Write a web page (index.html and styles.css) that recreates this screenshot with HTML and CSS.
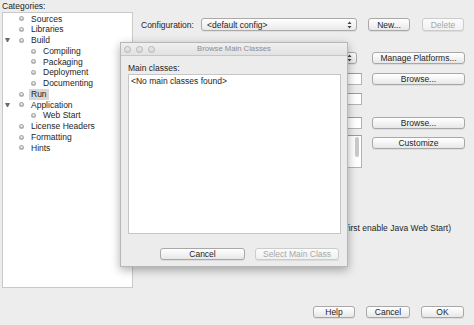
FILE: index.html
```html
<!DOCTYPE html>
<html lang="en">

<head>
  <meta charset="UTF-8">
  <title>Project Properties</title>
  <link rel="stylesheet" href="styles.css">
</head>

<body>
  <div class="window">
    <div class="cat-label">Categories:</div>

    <div class="main">
      <!-- Category tree -->
      <div class="tree">
        <div class="node"><span class="tw"></span><span class="dot l1"></span><span class="txt">Sources</span></div>
        <div class="node"><span class="tw"></span><span class="dot l1"></span><span class="txt">Libraries</span></div>
        <div class="node"><span class="tw open"></span><span class="dot l1"></span><span class="txt">Build</span></div>
        <div class="node"><span class="tw"></span><span class="dot l2"></span><span class="txt">Compiling</span></div>
        <div class="node"><span class="tw"></span><span class="dot l2"></span><span class="txt">Packaging</span></div>
        <div class="node"><span class="tw"></span><span class="dot l2"></span><span class="txt">Deployment</span></div>
        <div class="node"><span class="tw"></span><span class="dot l2"></span><span class="txt">Documenting</span></div>
        <div class="node"><span class="tw"></span><span class="dot l1"></span><span class="txt selected">Run</span></div>
        <div class="node"><span class="tw open"></span><span class="dot l1"></span><span class="txt">Application</span></div>
        <div class="node"><span class="tw"></span><span class="dot l2"></span><span class="txt">Web Start</span></div>
        <div class="node"><span class="tw"></span><span class="dot l1"></span><span class="txt">License Headers</span></div>
        <div class="node"><span class="tw"></span><span class="dot l1"></span><span class="txt">Formatting</span></div>
        <div class="node"><span class="tw"></span><span class="dot l1"></span><span class="txt">Hints</span></div>
      </div>

      <!-- Run settings (left part is covered by the dialog) -->
      <div class="panel">
        <div class="row r-config">
          <span class="lbl">Configuration:</span>
          <div class="combo"><span>&lt;default config&gt;</span>
            <svg class="arrows" width="5" height="8" viewBox="0 0 5 8"><path d="M2.5 0.5 L4.5 3 L0.5 3 Z M2.5 7.5 L4.5 5 L0.5 5 Z" fill="#444"/></svg>
          </div>
          <button class="btn btn-new">New...</button>
          <button class="btn btn-delete" disabled>Delete</button>
        </div>

        <div class="row r-platform">
          <span class="lbl"></span>
          <div class="combo"><span></span>
            <svg class="arrows" width="5" height="8" viewBox="0 0 5 8"><path d="M2.5 0.5 L4.5 3 L0.5 3 Z M2.5 7.5 L4.5 5 L0.5 5 Z" fill="#444"/></svg>
          </div>
          <button class="btn btn-wide btn-after-combo">Manage Platforms...</button>
        </div>

        <div class="row r-main">
          <span class="lbl"></span>
          <div class="field"></div>
          <button class="btn btn-wide">Browse...</button>
        </div>

        <div class="row r-args">
          <span class="lbl"></span>
          <div class="field"></div>
        </div>

        <div class="row r-dir">
          <span class="lbl"></span>
          <div class="field"></div>
          <button class="btn btn-wide">Browse...</button>
        </div>

        <div class="row r-vm">
          <span class="lbl"></span>
          <div class="field area"><span class="thumb"></span></div>
          <button class="btn btn-wide">Customize</button>
        </div>

        <div class="note">(first enable Java Web Start)</div>
      </div>
    </div>

    <div class="footer">
      <button class="btn btn-help">Help</button>
      <button class="btn btn-cancel">Cancel</button>
      <button class="btn btn-ok">OK</button>
    </div>

    <!-- Browse Main Classes dialog -->
    <div class="dialog">
      <div class="titlebar">
        <span class="light"></span><span class="light"></span><span class="light"></span>
        <span class="title">Browse Main Classes</span>
      </div>
      <div class="dlg-body">
        <div class="dlg-label">Main classes:</div>
        <div class="list">&lt;No main classes found&gt;</div>
        <div class="dlg-buttons">
          <button class="btn btn-dlg-cancel">Cancel</button>
          <button class="btn btn-select" disabled>Select Main Class</button>
        </div>
      </div>
    </div>
  </div>
</body>

</html>
```

FILE: styles.css
```css
body {
  margin: 0;
  background: #ededed;
  font-family: 'Liberation Sans', Arial, sans-serif;
  font-size: 8.5px;
  color: #1e1e1e;
}

.window {
  position: relative;
  width: 474px;
  height: 325px;
  overflow: hidden;
}

.cat-label {
  height: 12px;
  line-height: 12px;
  padding-left: 2px;
}

.main {
  display: flex;
  height: 276px;
}

/* tree */
.tree {
  box-sizing: border-box;
  width: 131px;
  margin-left: 2px;
  height: 276px;
  background: #fff;
  border: 1px solid #c9c9c9;
  padding-top: 0.6px;
}

.node {
  display: flex;
  align-items: center;
  height: 10.75px;
  line-height: 10.75px;
  white-space: nowrap;
}

.tw {
  width: 5px;
  height: 4px;
  margin-left: 2px;
  flex: none;
}

.tw.open {
  box-sizing: border-box;
  border-left: 2.5px solid transparent;
  border-right: 2.5px solid transparent;
  border-top: 4px solid #6a6a6a;
}

.dot {
  width: 5px;
  height: 5px;
  border-radius: 50%;
  flex: none;
  background: radial-gradient(circle at 50% 45%, #e6e6e6 0, #e6e6e6 0.8px, #a3a3a3 1.6px, #b8b8b8 2.5px);
}

.dot.l1 {
  margin-left: 9px;
}

.dot.l2 {
  margin-left: 21px;
}

.txt {
  margin-left: 7px;
}

.txt.selected {
  margin-left: 5px;
  padding: 0 2px;
  background: #d8d8d8;
}

/* form panel */
.panel {
  flex: 1;
  padding-left: 8px;
  padding-right: 9px;
}

.row {
  display: flex;
  align-items: center;
  height: 12px;
}

.lbl {
  width: 60px;
  flex: none;
  white-space: nowrap;
}

.r-config {
  margin-top: 6px;
  height: 13px;
}

.r-platform {
  margin-top: 21px;
}

.r-main {
  margin-top: 9px;
}

.r-args {
  margin-top: 8px;
}

.r-dir {
  margin-top: 12px;
}

.r-vm {
  margin-top: 6px;
  height: 33px;
  align-items: flex-start;
}

.combo {
  box-sizing: border-box;
  width: 156px;
  height: 100%;
  display: flex;
  align-items: center;
  justify-content: space-between;
  padding: 0 4px 0 5px;
  border: 1px solid #a9a9a9;
  border-radius: 3px;
  background: linear-gradient(#ffffff, #f3f3f3 55%, #e9e9e9);
  box-shadow: 0 1px 0 rgba(0, 0, 0, 0.06);
}

.field {
  box-sizing: border-box;
  width: 161px;
  height: 100%;
  background: #fff;
  border: 1px solid #b3b3b3;
  border-top-color: #9c9c9c;
}

.field.area {
  position: relative;
}

.thumb {
  position: absolute;
  right: 2px;
  top: 1px;
  width: 4px;
  height: 20px;
  border-radius: 2px;
  background: #c9c9c9;
}

.btn {
  box-sizing: border-box;
  height: 12px;
  padding: 0;
  font-family: inherit;
  font-size: 8.5px;
  line-height: 10px;
  color: #1e1e1e;
  text-align: center;
  border: 1px solid #a8a8a8;
  border-radius: 3px;
  background: linear-gradient(#ffffff, #f4f4f4 50%, #e7e7e7);
  box-shadow: 0 1px 0 rgba(0, 0, 0, 0.07);
  flex: none;
}

.btn:disabled {
  color: #a8a8a8;
  border-color: #cbcbcb;
  background: linear-gradient(#fbfbfb, #f1f1f1);
}

.r-config .btn {
  height: 13px;
  width: 42px;
}

.btn-new {
  margin-left: 11px;
}

.btn-delete {
  margin-left: 12px;
}

.btn-wide {
  width: 93px;
  margin-left: 10px;
}

.btn-wide.btn-after-combo {
  margin-left: 15px;
}

.r-vm .btn {
  margin-top: 2px;
}

.note {
  margin-top: 54.5px;
  margin-right: 14px;
  line-height: 11px;
  text-align: right;
  white-space: nowrap;
}

.footer {
  display: flex;
  justify-content: flex-end;
  gap: 11px;
  margin-top: 18px;
  padding-right: 10px;
}

.btn-help {
  width: 42px;
}

.btn-cancel {
  width: 44px;
}

.btn-ok {
  width: 43px;
}

/* dialog */
.dialog {
  position: absolute;
  left: 120px;
  top: 42px;
  width: 228px;
  height: 225px;
  box-sizing: border-box;
  border: 1px solid #b7b7b7;
  background: #ececec;
  box-shadow: 0 3px 9px rgba(0, 0, 0, 0.32);
  z-index: 2;
}

.titlebar {
  position: relative;
  box-sizing: border-box;
  height: 13px;
  display: flex;
  align-items: center;
  gap: 5px;
  padding-left: 3px;
  background: linear-gradient(#efefef, #e2e2e2);
  border-bottom: 1px solid #c6c6c6;
}

.light {
  box-sizing: border-box;
  width: 7px;
  height: 7px;
  border-radius: 50%;
  border: 1px solid #b5b5b5;
  background: linear-gradient(#e9e9e9, #d7d7d7);
}

.title {
  position: absolute;
  left: 0;
  right: 0;
  top: 0;
  line-height: 12px;
  text-align: center;
  font-size: 7.7px;
  color: #8c8c8c;
}

.dlg-body {
  padding: 7px 7px 0 7px;
}

.dlg-label {
  line-height: 11px;
}

.list {
  box-sizing: border-box;
  height: 160px;
  width: 213px;
  background: #fff;
  border: 1px solid #c6c6c6;
  padding: 1px 2px;
  line-height: 11px;
}

.dlg-buttons {
  display: flex;
  justify-content: flex-end;
  gap: 10px;
  margin-top: 14px;
  padding-right: 1px;
}

.btn-dlg-cancel {
  width: 85px;
}

.btn-select {
  width: 84px;
}
```
